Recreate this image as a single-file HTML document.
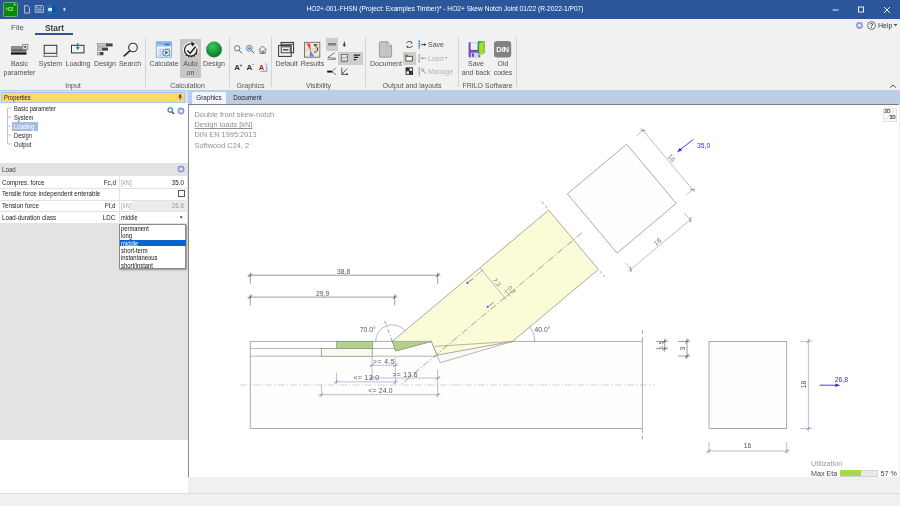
<!DOCTYPE html>
<html><head><meta charset="utf-8"><title>HO2+ Skew Notch Joint</title>
<style>
*{box-sizing:border-box;margin:0;padding:0}
html,body{width:900px;height:506px;overflow:hidden;background:#f0f0f0;font-family:"Liberation Sans",sans-serif;font-size:7px;color:#333}
.a{position:absolute}
.t{position:absolute;white-space:nowrap;line-height:9px}
.c{position:absolute;white-space:nowrap;line-height:9px;text-align:center;transform:translateX(-50%)}
#title{left:0;top:0;width:900px;height:18.6px;background:#2b579a}
#ribbon{left:0;top:18.6px;width:900px;height:72px;background:#f1f1f1}
#strip{left:0;top:90.2px;width:900px;height:14px;background:#bccde6}
.sep{position:absolute;top:37px;width:1px;height:50px;background:#d4d4d4}
.rl{color:#505050}
.gl{color:#555}
</style></head><body>
<div id="root" style="position:absolute;left:0;top:0;width:900px;height:506px;will-change:transform">
<div id="title" class="a"></div>
<div id="ribbon" class="a"></div>
<div id="strip" class="a"></div>

<!-- title bar -->
<div class="a" style="left:3.4px;top:2.3px;width:14.2px;height:14.3px;background:#058a05;border:0.8px solid #6db06d;border-radius:1.5px"></div>
<div class="t" style="left:5.7px;top:6.1px;color:#d4ecd4;font-size:4.6px;line-height:8px;letter-spacing:-0.3px;transform:scaleX(.85);transform-origin:0 50%">HO2</div>
<div class="t" style="left:13.2px;top:1.2px;color:#e4f4e4;font-size:5px;line-height:7px">+</div>
<svg class="a" style="left:22px;top:4px" width="50" height="12" viewBox="0 0 50 12">
 <path d="M2.6 1.6h3l1.9 1.9v5.6h-4.9z" fill="none" stroke="#e8edf6" stroke-width="0.7"/>
 <path d="M13.2 1.5h7.4l0.9 0.9v6h-8.3z" fill="none" stroke="#cfd9ea" stroke-width="0.7"/>
 <path d="M14.6 1.7v2.3h4.6v-2.3M14.2 5.6h6.2M14.2 7h6.2" fill="none" stroke="#cfd9ea" stroke-width="0.6"/>
 <rect x="25.3" y="1.5" width="8.8" height="8" fill="#1a73d0"/><rect x="30" y="1.5" width="4.1" height="8" fill="#0d50b0"/><path d="M25.3 9h8.8" stroke="#0a7a80" stroke-width="0.9"/>
 <rect x="26.2" y="4" width="3.8" height="3" fill="#e4ecf8"/>
 <path d="M41.4 3.8h2v2h-2z" fill="#cfd9ea"/><path d="M41.3 5.8h2.2l-1.1 1.5z" fill="#fff"/>
</svg>
<div class="c" style="left:445px;top:4px;color:#fff;font-size:6.62px;line-height:10px">HO2+-001-FHSN (Project: Examples Timber)* - HO2+ Skew Notch Joint 01/22 (R-2022-1/P07)</div>
<svg class="a" style="left:820px;top:0" width="80" height="18" viewBox="0 0 80 18">
 <path d="M12.5 10h6" stroke="#fff" stroke-width="0.9"/>
 <rect x="38.5" y="7" width="5" height="5" fill="none" stroke="#fff" stroke-width="0.9"/>
 <path d="M64 7l6 6M70 7l-6 6" stroke="#fff" stroke-width="0.9"/>
</svg>


<!-- menu tabs -->
<div class="c" style="left:17.5px;top:22.5px;font-size:8px;line-height:10px;color:#555">File</div>
<div class="c" style="left:54.5px;top:22.5px;font-size:8.3px;line-height:10px;color:#3a3a3a;font-weight:bold">Start</div>
<div class="a" style="left:35px;top:33px;width:38px;height:2px;background:#2b579a"></div>
<!-- help -->
<svg class="a" style="left:852px;top:19px" width="48" height="12" viewBox="0 0 48 12">
 <circle cx="7.5" cy="6.5" r="3.4" fill="#8d97d6"/><path d="M5.8 7.8v-2l1.7-1.4 1.7 1.4v2z" fill="#e8eafa"/>
 <circle cx="19.5" cy="6.5" r="3.9" fill="#fff" stroke="#444" stroke-width="0.8"/>
</svg>
<div class="t" style="left:869.6px;top:21px;font-size:6.5px;line-height:9px;color:#333;font-weight:bold">?</div>
<div class="t" style="left:878px;top:21px;font-size:7px;line-height:9px;color:#333">Help</div>
<svg class="a" style="left:893px;top:23px" width="6" height="5"><path d="M0.5 1h4l-2 2.2z" fill="#555"/></svg>
<svg class="a" style="left:888px;top:83px" width="10" height="6"><path d="M2 4.6l3-2.5 3 2.5" fill="none" stroke="#555" stroke-width="1"/></svg>
<!-- separators -->
<div class="sep" style="left:145px"></div><div class="sep" style="left:229px"></div><div class="sep" style="left:271px"></div>
<div class="sep" style="left:365px"></div><div class="sep" style="left:458px"></div><div class="sep" style="left:516px"></div>
<!-- pressed backgrounds -->
<div class="a" style="left:180px;top:39px;width:21px;height:39px;background:#c8c6c4"></div>
<div class="a" style="left:326px;top:38px;width:12px;height:13px;background:#cfcdcb"></div>
<div class="a" style="left:338px;top:52px;width:25px;height:13px;background:#cfcdcb"></div>
<div class="a" style="left:403px;top:52px;width:13px;height:13px;background:#cfcdcb"></div>
<!-- group labels -->
<div class="c gl" style="left:73px;top:81px">Input</div>
<div class="c gl" style="left:187.5px;top:81px">Calculation</div>
<div class="c gl" style="left:250.5px;top:81px">Graphics</div>
<div class="c gl" style="left:318.5px;top:81px">Visibility</div>
<div class="c gl" style="left:412px;top:81px">Output and layouts</div>
<div class="c gl" style="left:487.5px;top:81px">FRILO Software</div>
<!-- big button labels -->
<div class="c rl" style="left:19.5px;top:58.5px">Basic<br>parameter</div>
<div class="c rl" style="left:50.5px;top:58.5px">System</div>
<div class="c rl" style="left:78px;top:58.5px">Loading</div>
<div class="c rl" style="left:105px;top:58.5px">Design</div>
<div class="c rl" style="left:130px;top:58.5px">Search</div>
<div class="c rl" style="left:164px;top:58.5px">Calculate</div>
<div class="c rl" style="left:190.5px;top:58.5px">Auto<br>on</div>
<div class="c rl" style="left:214px;top:58.5px">Design</div>
<div class="c rl" style="left:286.5px;top:58.5px">Default</div>
<div class="c rl" style="left:312.5px;top:58.5px">Results</div>
<div class="c rl" style="left:386px;top:58.5px">Document</div>
<div class="c rl" style="left:476px;top:58.5px">Save<br>and back</div>
<div class="c rl" style="left:503px;top:58.5px">Old<br>codes</div>
<div class="t rl" style="left:428px;top:40px">Save</div>
<div class="t" style="left:428px;top:54px;color:#b4b4b4">Load</div>
<div class="t" style="left:428px;top:67px;color:#b4b4b4">Manage</div>
<svg class="a" style="left:444px;top:56px" width="6" height="5"><path d="M0.5 1h3.4l-1.7 2z" fill="#b4b4b4"/></svg>

<svg class="a" style="left:0;top:35px" width="900" height="55" viewBox="0 35 900 55">
<defs>
 <radialGradient id="gb" cx="0.4" cy="0.3" r="0.75"><stop offset="0" stop-color="#3fc765"/><stop offset="0.55" stop-color="#1a9a3c"/><stop offset="1" stop-color="#0c6a26"/></radialGradient>
 <linearGradient id="calc" x1="0" y1="0" x2="0" y2="1"><stop offset="0" stop-color="#6fa4e8"/><stop offset="1" stop-color="#b9d3f5"/></linearGradient>
</defs>
<!-- basic parameter -->
<rect x="11" y="46" width="13" height="3.2" fill="#8e8e8e"/>
<rect x="11" y="49.2" width="15.5" height="2.4" fill="#5c5c5c"/>
<rect x="11" y="52.3" width="15.5" height="2.3" fill="#151515"/>
<rect x="22.6" y="44.4" width="5.2" height="5.2" fill="#d8d8d8" stroke="#8c8c8c" stroke-width="0.9"/><rect x="24.3" y="46.1" width="1.8" height="1.8" fill="#555"/>
<!-- system -->
<rect x="44.2" y="45.3" width="12.6" height="8" fill="none" stroke="#333" stroke-width="1"/>
<path d="M44.2 53.3v3M56.8 53.3v3" stroke="#555" stroke-width="0.7"/>
<path d="M43.3 56.4h14.4" stroke="#333" stroke-width="0.7"/>
<!-- loading -->
<rect x="71.5" y="45.3" width="12.5" height="7.6" fill="none" stroke="#333" stroke-width="1"/>
<path d="M77.7 43v5" stroke="#0d8a8a" stroke-width="1.2"/><path d="M75.6 47.3h4.2l-2.1 2.7z" fill="#0d8a8a"/>
<!-- design bars -->
<rect x="97.3" y="43.6" width="9" height="2.6" fill="#c2c2c2" stroke="#777" stroke-width="0.5"/><rect x="106" y="43.4" width="6.6" height="3" fill="#444"/>
<rect x="97.3" y="47.8" width="5" height="2.6" fill="#c2c2c2" stroke="#777" stroke-width="0.5"/><rect x="102" y="47.6" width="6" height="3" fill="#444"/>
<rect x="97.3" y="52.2" width="3" height="2.8" fill="#c2c2c2" stroke="#777" stroke-width="0.5"/><rect x="100" y="52" width="3.5" height="3.2" fill="#444"/>
<!-- search -->
<circle cx="133" cy="47.5" r="4.3" fill="none" stroke="#333" stroke-width="1.1"/><path d="M129.8 50.8l-5.6 5" stroke="#333" stroke-width="1.8" stroke-linecap="round"/>
<!-- calculate -->
<rect x="156.3" y="41.8" width="15.2" height="15.4" fill="#f4f8fe" stroke="#6f9fe0" stroke-width="0.8"/>
<rect x="156.7" y="42.2" width="14.4" height="4.6" fill="url(#calc)"/>
<path d="M164.5 44.6h5" stroke="#2a5fb8" stroke-width="1.2"/>
<path d="M158 49.5h7M158 51.7h6M158 53.9h6M158 55.6h7M160.3 48.2v8M162.8 48.2v8" stroke="#9aa7b8" stroke-width="0.5"/>
<rect x="165.5" y="48.3" width="4.5" height="1.2" fill="#f0b060"/>
<circle cx="166.3" cy="52.6" r="3.5" fill="#d6e8fb" stroke="#3d83d6" stroke-width="0.9"/><path d="M165.2 50.8l3 1.8-3 1.8z" fill="#1558b6"/>
<rect x="169.3" y="55" width="1.2" height="1.2" fill="#e06030"/>
<!-- auto on -->
<circle cx="190.8" cy="49.8" r="8" fill="#f4f4f4" opacity="0.9"/>
<path d="M193.2 44.3a6.2 6.2 0 1 0 3.6 4.4" fill="none" stroke="#222" stroke-width="1.2"/>
<path d="M185.8 54.6a6.6 6.6 0 0 0 11.2 -1.9" fill="none" stroke="#222" stroke-width="1.3" stroke-dasharray="1.7 1.1"/>
<path d="M191.2 41.6l3.8 2.4-3 2.6z" fill="#222"/>
<path d="M187.4 50.5l2.7 2.9 5.6-6.8" fill="none" stroke="#222" stroke-width="1.5"/>
<!-- green ball -->
<circle cx="214" cy="49.5" r="7.9" fill="url(#gb)"/>
<!-- graphics small icons -->
<circle cx="237.2" cy="48.3" r="2.7" fill="none" stroke="#444" stroke-width="0.7"/><path d="M239.2 50.4l2.6 2.8" stroke="#444" stroke-width="0.9"/>
<circle cx="249.3" cy="48.3" r="2.9" fill="#e4f0fc" stroke="#456" stroke-width="0.7"/><path d="M249.3 46.6v3.4M247.6 48.3h3.4" stroke="#2a7fd6" stroke-width="0.9"/><path d="M251.4 50.5l2.7 2.8" stroke="#444" stroke-width="0.9"/>
<path d="M258.8 49.8l3.8-3.8 3.8 3.8M260 49.2v4.2h5.2v-4.2M262 53.4v-2.4h1.3v2.4" fill="none" stroke="#444" stroke-width="0.7"/>
<path d="M260.4 63.4h4.6l1.8 1.8v6.2h-6.4z" fill="#e9eef8"/><path d="M265 63.4l1.8 1.8v6.2h-6.4" fill="none" stroke="#6f95c8" stroke-width="0.9"/>
<!-- default -->
<rect x="281" y="42.4" width="12.6" height="10.3" fill="#f1f1f1" stroke="#333" stroke-width="1"/>
<path d="M281 44.3h12.6" stroke="#333" stroke-width="0.9"/>
<rect x="278.6" y="45.6" width="12.6" height="10.8" fill="#f1f1f1" stroke="#333" stroke-width="1"/>
<rect x="281.2" y="46.8" width="9" height="6" fill="#f1f1f1" stroke="#333" stroke-width="0.9"/>
<path d="M283 49.8h5.4" stroke="#333" stroke-width="1.3"/>
<!-- results -->
<rect x="304.5" y="42.3" width="15.3" height="14.9" fill="#efead8" stroke="#6e6c62" stroke-width="0.9"/>
<path d="M305 49.5h14.4" stroke="#e2dcc6" stroke-width="3"/>
<path d="M306.2 43.4h4.1l0.4 7.2z" fill="#f04444"/><path d="M310.3 50l4.1 6.6h-4.9z" fill="#5b8fcf"/>
<path d="M313.8 44.8h3.6M314.4 44.9c0.4 1.6 3.4 1.6 3.2 4.4c-0.2 2.2-2 3-3.4 3" fill="none" stroke="#222" stroke-width="1"/>
<!-- visibility small -->
<rect x="328" y="42.9" width="8.2" height="2.7" rx="1" fill="#777"/><path d="M329.5 44.1h5" stroke="#aaa" stroke-width="0.6" stroke-dasharray="0.8 0.5"/>
<path d="M344.3 41.6v4" stroke="#333" stroke-width="1"/><path d="M342.5 44.4h3.6l-1.8 2.6z" fill="#333"/>
<path d="M327.8 57.5l7-5M327.8 57.6l8 0.8" stroke="#444" stroke-width="0.7"/><path d="M327.5 59.4h8.5" stroke="#888" stroke-width="1"/>
<rect x="341.3" y="54.6" width="6.2" height="7" fill="#ececec" stroke="#555" stroke-width="0.7"/><path d="M341.6 58.6l1.6-1.2 1.4 0.8 1.4-1.6 1.2 1.4" fill="none" stroke="#444" stroke-width="0.5"/><path d="M341.5 60.2h6" stroke="#777" stroke-width="0.5"/>
<path d="M353.8 55.2h6.2M353.8 57.4h4.4M353.8 59.6h2.4" stroke="#222" stroke-width="1.3"/>
<path d="M327.2 71.6h5" stroke="#111" stroke-width="1.9"/><path d="M332 71.6l4-4M332 71.7l4 3" stroke="#444" stroke-width="0.7"/>
<path d="M341.8 67.6v7M341.8 74.4l5.6 0M342 74.2l5-5.6" stroke="#333" stroke-width="0.8" fill="none"/><rect x="346.3" y="73.3" width="1.6" height="1.6" fill="#333"/>
<!-- document -->
<path d="M380.4 41.8h7l4.2 4.2v10.2a1 1 0 0 1 -1 1h-10.2a1 1 0 0 1 -1 -1v-13.4a1 1 0 0 1 1 -1z" fill="#c4c4c4" stroke="#8e8e8e" stroke-width="0.8"/>
<path d="M387.4 41.8v4.2h4.2z" fill="#f1f1f1" stroke="#8e8e8e" stroke-width="0.7"/>
<!-- output small -->
<path d="M406.4 43.3a3.2 3.2 0 0 1 5.6 -0.6M412.4 45.5a3.2 3.2 0 0 1 -5.6 0.8" fill="none" stroke="#333" stroke-width="0.8"/><path d="M411 41.4l1.8 1.5-2 0.8zM408 48l-1.8-1.4 2-0.9z" fill="#333"/>
<path d="M405.8 56.4h6.6v4.6h-6.6z" fill="#fff" stroke="#333" stroke-width="0.8"/><path d="M405.3 54l3.2 1.8-3.2 1.8z" fill="#1c9a2a"/>
<rect x="405.6" y="67.4" width="7.4" height="7.4" fill="#222"/><rect x="409.6" y="68.3" width="2.6" height="2.6" fill="#f1f1f1"/><rect x="406.4" y="71.3" width="2.6" height="2.6" fill="#f1f1f1"/><path d="M407 70.6l2-2M410.6 73.4l2-2" stroke="#999" stroke-width="0.5"/>
<path d="M419.3 40.6v8" stroke="#2f6fb4" stroke-width="1.5" stroke-dasharray="1.6 0.7"/><path d="M421 44.6h4" stroke="#222" stroke-width="0.8"/><path d="M424.2 43.2l2 1.4-2 1.4z" fill="#222"/>
<path d="M419.3 54.2v8" stroke="#999" stroke-width="1.5" stroke-dasharray="1.6 0.7"/><path d="M422 58.2h4" stroke="#999" stroke-width="0.8"/><path d="M422.8 56.8l-2 1.4 2 1.4z" fill="#999"/>
<path d="M419.3 67.4v8" stroke="#999" stroke-width="1.5" stroke-dasharray="1.6 0.7"/><circle cx="422.6" cy="70" r="1.2" fill="none" stroke="#888" stroke-width="0.7"/><path d="M423.4 71l2.4 2.6" stroke="#888" stroke-width="0.9"/>
<!-- save and back -->
<path d="M468.6 42.3h11.6v15h-11.6z" fill="#6d4fb8"/><rect x="470.6" y="42.3" width="7" height="7.6" fill="#ececf4"/><rect x="470.8" y="52.6" width="7.8" height="4.7" fill="#d8d4e8"/><rect x="472" y="53.4" width="2" height="3.4" fill="#6d4fb8"/>
<path d="M478 41.2h6.6v12h-6.6z" fill="#24a23a"/><path d="M479.2 43.2l4.6-1.6v12.4l-4.6 1.6z" fill="#a8e030"/>
<!-- DIN -->
<rect x="494" y="41" width="17.2" height="16.6" rx="3" fill="#828282"/>
</svg>
<div class="c" style="left:502.6px;top:44.5px;color:#fff;font-weight:bold;font-size:7.6px;line-height:10px;letter-spacing:-0.2px">DIN</div>
<div class="t" style="left:234.2px;top:63px;font-size:8px;line-height:10px;color:#333;font-weight:bold">A</div><div class="t" style="left:239.6px;top:61.6px;font-size:5px;line-height:6px;color:#333;font-weight:bold">+</div>
<div class="t" style="left:246.6px;top:63px;font-size:8px;line-height:10px;color:#333;font-weight:bold">A</div><div class="t" style="left:252px;top:61.2px;font-size:6px;line-height:6px;color:#333;font-weight:bold">-</div>
<div class="t" style="left:258.8px;top:63px;font-size:7.4px;line-height:9px;color:#b01c1c;font-weight:bold">A</div>



<!-- left panel -->
<div class="a" style="left:0;top:90.7px;width:188.4px;height:12.6px;background:#d6e2f3"></div>
<div class="a" style="left:1.2px;top:91.7px;width:184px;height:11.2px;background:#ffd968;border:0.7px solid #a9c6ec"></div>
<div class="t" style="left:3.5px;top:93px;font-size:6.6px;transform:scaleX(.89);transform-origin:0 50%;color:#222">Properties</div>
<svg class="a" style="left:176px;top:93px" width="8" height="9" viewBox="0 0 8 9"><path d="M3.3 1.6h1.8v2.4h-1.8z" fill="#333"/><path d="M2.5 4.3h3.4M4.2 4.4v2.4" stroke="#333" stroke-width="0.7"/></svg>
<div class="a" style="left:0;top:103px;width:188.4px;height:60px;background:#fff"></div>
<div class="a" style="left:0;top:163px;width:188.4px;height:277px;background:#e3e3e3"></div>
<div class="a" style="left:0;top:440px;width:188.4px;height:53px;background:#fff"></div>
<!-- tree -->
<svg class="a" style="left:0;top:103px" width="20" height="50" viewBox="0 0 20 50"><path d="M7.5 5h4M7.5 14h4M7.5 23h4M7.5 32h4M7.5 41h4M7.5 5v36" stroke="#a0a0a0" stroke-width="0.6" fill="none"/></svg>
<div class="a" style="left:11.8px;top:122px;width:26.4px;height:9px;background:#a6bbe2"></div>
<div class="t" style="left:13.5px;top:103.5px;font-size:6.5px;transform:scaleX(.885);transform-origin:0 50%;color:#222">Basic parameter</div>
<div class="t" style="left:13.5px;top:112.5px;font-size:6.5px;transform:scaleX(.885);transform-origin:0 50%;color:#222">System</div>
<div class="t" style="left:13.5px;top:121.5px;font-size:6.5px;transform:scaleX(.885);transform-origin:0 50%;color:#fff">Loading</div>
<div class="t" style="left:13.5px;top:130.5px;font-size:6.5px;transform:scaleX(.885);transform-origin:0 50%;color:#222">Design</div>
<div class="t" style="left:13.5px;top:139.5px;font-size:6.5px;transform:scaleX(.885);transform-origin:0 50%;color:#222">Output</div>
<svg class="a" style="left:166px;top:106px" width="22" height="10" viewBox="0 0 22 10">
 <circle cx="4.2" cy="4" r="2.2" fill="#f4f9fe" stroke="#2f74c4" stroke-width="1.1"/><path d="M5.8 5.8l2.3 2.2" stroke="#2a4f9a" stroke-width="1.3"/>
 <circle cx="15" cy="5" r="3.4" fill="#8d97d6"/><path d="M13.3 6.4v-2l1.7-1.4 1.7 1.4v2z" fill="#e8eafa"/>
</svg>
<!-- Load section -->
<div class="t" style="left:2px;top:164.5px;font-size:6.6px;transform:scaleX(.94);transform-origin:0 50%;color:#444">Load</div>
<svg class="a" style="left:176px;top:164px" width="10" height="10" viewBox="0 0 10 10"><circle cx="5" cy="5" r="3.4" fill="#8d97d6"/><path d="M3.3 6.4v-2l1.7-1.4 1.7 1.4v2z" fill="#e8eafa"/></svg>
<div class="a" style="left:0;top:176px;width:187px;height:47px;background:#fff"></div>
<div class="a" style="left:0;top:187.7px;width:187px;height:0.7px;background:#e2e2e2"></div>
<div class="a" style="left:0;top:199.5px;width:187px;height:0.7px;background:#e2e2e2"></div>
<div class="a" style="left:0;top:211.4px;width:187px;height:0.7px;background:#e2e2e2"></div>
<div class="a" style="left:118.5px;top:176px;width:0.7px;height:47px;background:#e2e2e2"></div>
<div class="a" style="left:132px;top:201px;width:54.5px;height:9.5px;background:#ececec"></div>
<div class="t" style="left:2px;top:177.6px;font-size:6.6px;transform:scaleX(.94);transform-origin:0 50%;color:#222">Compres. force</div>
<div class="t" style="left:2px;top:188.9px;font-size:6.6px;transform:scaleX(.94);transform-origin:0 50%;color:#222">Tensile force independent enterable</div>
<div class="t" style="left:2px;top:201.2px;font-size:6.6px;transform:scaleX(.94);transform-origin:0 50%;color:#222">Tension force</div>
<div class="t" style="left:2px;top:213px;font-size:6.6px;transform:scaleX(.94);transform-origin:0 50%;color:#222">Load-duration class</div>
<div class="t" style="right:784.5px;top:177.6px;font-size:6.6px;transform:scaleX(.94);transform-origin:100% 50%;color:#222">Fc,d</div>
<div class="t" style="right:784.5px;top:201.2px;font-size:6.6px;transform:scaleX(.94);transform-origin:100% 50%;color:#222">Ft,d</div>
<div class="t" style="right:784.5px;top:213px;font-size:6.6px;transform:scaleX(.94);transform-origin:100% 50%;color:#222">LDC</div>
<div class="t" style="left:120.8px;top:177.6px;font-size:6.6px;transform:scaleX(.9);transform-origin:0 50%;color:#a6a6a6">[kN]</div>
<div class="t" style="left:120.8px;top:201.2px;font-size:6.6px;transform:scaleX(.9);transform-origin:0 50%;color:#a6a6a6">[kN]</div>
<div class="t" style="right:716px;top:177.6px;font-size:6.6px;transform:scaleX(.94);transform-origin:100% 50%;color:#222">35.0</div>
<div class="t" style="right:716px;top:201.2px;font-size:6.6px;transform:scaleX(.94);transform-origin:100% 50%;color:#999">26.8</div>
<div class="a" style="left:178px;top:190.4px;width:7px;height:7px;background:#fff;border:0.7px solid #555"></div>
<div class="t" style="left:121px;top:213.2px;font-size:6.3px;transform:scaleX(.89);transform-origin:0 50%;color:#222">middle</div>
<svg class="a" style="left:178px;top:215px" width="7" height="5"><path d="M1.6 1.4h3.2l-1.6 2z" fill="#222"/></svg>
<!-- dropdown -->
<div class="a" style="left:119.3px;top:223.6px;width:67px;height:45px;background:#fff;border:0.8px solid #8a8a8a;box-shadow:1px 1px 1.5px rgba(0,0,0,0.35)"></div>
<div class="a" style="left:120px;top:240px;width:65.6px;height:6.2px;background:#0a64cf"></div>
<div class="t" style="left:120.5px;top:225.2px;font-size:6.3px;transform:scaleX(.93);transform-origin:0 50%;color:#111;line-height:7.3px">permanent<br>long<br><span style="color:#fff">middle</span><br>short-term<br>instantaneous<br>short/instant</div>


<!-- canvas -->
<div class="a" style="left:188.4px;top:104px;width:710.6px;height:373.3px;background:#fff;border-left:1.8px solid #8a8a8a;border-top:1.4px solid #7d7d7d"></div>
<!-- tabs -->
<div class="a" style="left:192px;top:92px;width:34px;height:12px;background:#f2f6fc;border-radius:2px 2px 0 0"></div>
<div class="c" style="left:209px;top:93px;font-size:6.35px;color:#222">Graphics</div>
<div class="c" style="left:247.5px;top:93px;font-size:6.3px;color:#222">Document</div>
<!-- info text -->
<div class="t" style="left:194.5px;top:110px;font-size:7.4px;line-height:10.2px;color:#909090">Double front skew-notch<br><span style="text-decoration:underline">Design loads [kN]</span><br>DIN EN 1995:2013<br>Softwood C24, 2</div>
<!-- 2D/3D -->
<div class="a" style="left:883px;top:108px;width:14px;height:13.5px;background:#fafafa;border:0.7px solid #e0e0e0"></div>
<svg class="a" style="left:883px;top:108px" width="14" height="14"><path d="M3 11.5l8.5-9.5" stroke="#f2c68a" stroke-width="0.8"/></svg>
<div class="t" style="left:884.3px;top:108.6px;font-size:4.8px;line-height:6px;font-weight:bold;color:#444">2D</div>
<div class="t" style="left:889.5px;top:114.6px;font-size:4.8px;line-height:6px;font-weight:bold;color:#444">3D</div>
<!-- utilization -->
<div class="t" style="left:811px;top:459px;font-size:7.2px;color:#999">Utilization</div>
<div class="t" style="left:811px;top:468.8px;font-size:7.2px;color:#444">Max Eta</div>
<div class="a" style="left:840px;top:469.8px;width:38.2px;height:6.8px;background:#e9e9e9;border:0.7px solid #d4d4d4"></div>
<div class="a" style="left:840.4px;top:470.4px;width:21px;height:5.8px;background:#a6da4c"></div>
<div class="t" style="left:880.5px;top:468.8px;font-size:7.2px;color:#444">57 %</div>
<!-- status -->
<div class="a" style="left:0;top:493px;width:900px;height:0.8px;background:#dcdcdc"></div>
<!--DRAW_S-->
<svg class="a" style="left:0;top:0" width="900" height="506" viewBox="0 0 900 506" font-family="Liberation Sans, sans-serif" font-size="6.8" fill="none">
<path d="M250.3 341.4H642.4V428.5H250.3z" fill="#fefefc" stroke="#868686" stroke-width="0.7"/>
<path d="M431.4 341.4L440.2 362.8L512.5 341.4z" fill="#fafaf4" stroke="#868686" stroke-width="0.6"/>
<path d="M392.3 341.4L395.8 350.9L431.4 341.4L437.1 355.1L512.5 341.4L598.4 269.4L548.7 210.1z" fill="#fbfbd8" stroke="#868686" stroke-width="0.7" stroke-linejoin="round"/>
<path d="M392.3 341.4L395.8 350.9L431.4 341.4z" fill="#b3d288" stroke="#868686" stroke-width="0.6"/>
<path d="M434.8 346.4L512.5 341.4" stroke="#868686" stroke-width="0.6"/>
<path d="M250.3 348.5H394.9M250.3 356.2H437.5M321.4 348.5V356.2M372.1 348.5V356.2" stroke="#868686" stroke-width="0.6"/>
<rect x="321.4" y="348.5" width="50.7" height="7.7" fill="#f9fbf1" stroke="#868686" stroke-width="0.6"/>
<rect x="336.5" y="341.4" width="36.3" height="7.1" fill="#b4d28c" stroke="#868686" stroke-width="0.6"/>
<path d="M240 385H655" stroke="#a4a4a4" stroke-width="0.5" stroke-dasharray="7 2 1.5 2"/>
<path d="M642.4 330.3V341M642.4 429V439.5" stroke="#666" stroke-width="0.6" stroke-dasharray="4 3"/>
<path d="M582.0 232.7L400.3 385" stroke="#666" stroke-width="0.6" stroke-dasharray="7 2 1.5 2"/>
<path d="M541.7 201.7L547.4 208.6M599.7 270.9L604.8 277.0" stroke="#666" stroke-width="0.6" stroke-dasharray="3 2.5"/>
<path d="M375.6 341.4A16.7 16.7 0 0 1 405.1 330.7" stroke="#868686" stroke-width="0.6"/>
<path d="M392.3 341.4L384.8 320.7" stroke="#555" stroke-width="0.6" stroke-dasharray="4 2 1 2"/>
<path d="M535.0 341.4A22.5 22.5 0 0 0 529.7 326.9" stroke="#868686" stroke-width="0.6"/>
<path d="M247.5 275.2H440.5M250.3 272.6V283.6M437.7 272.6V283.6M247.5 297.1H397.5M250.3 294.4V305.4M394.7 294.4V305.4" stroke="#555" stroke-width="0.6"/>
<path d="M248.5 277.0L252.1 273.4M435.9 277.0L439.5 273.4M248.5 298.9L252.1 295.3M392.9 298.9L396.5 295.3" stroke="#333" stroke-width="0.7"/>
<path d="M369.5 365.3H398M372.1 356.5V380.5M395.3 357V384M369.5 378H440.5M437.7 369.6V397.5M334 381.9H398M336.5 372.6V384M318.5 394.7H440.5M321.4 384.5V397.5" stroke="#9292bc" stroke-width="0.6"/>
<path d="M370.3 367.1L373.9 363.5M393.5 367.1L397.1 363.5M370.3 379.8L373.9 376.2M435.9 379.8L439.5 376.2M334.7 383.7L338.3 380.1M393.5 383.7L397.1 380.1M319.6 396.5L323.2 392.9M435.9 396.5L439.5 392.9" stroke="#6a6aa8" stroke-width="0.7"/>
<path d="M656 341.4H668M656 348.7H668M664.7 338.5V351.6M678 341.4H690M678 356.1H690M687 338.5V359" stroke="#555" stroke-width="0.6"/>
<path d="M662.9 343.2L666.5 339.6M662.9 350.5L666.5 346.9M685.2 343.2L688.8 339.6M685.2 357.9L688.8 354.3" stroke="#333" stroke-width="0.7"/>
<rect x="709" y="341.4" width="77.7" height="87.1" fill="#fefefc" stroke="#868686" stroke-width="0.7"/>
<path d="M567.4 193.9L626.6 144.2L676.3 203.4L617.1 253.1z" fill="#fefefc" stroke="#868686" stroke-width="0.7"/>
<path d="M808.4 338.5V431.5M800 341.4H812M800 428.5H812M706 451H789.5M709 442V453.5M786.7 442V453.5" stroke="#9292bc" stroke-width="0.6"/>
<path d="M806.6 343.2L810.2 339.6M806.6 430.3L810.2 426.7M707.2 452.8L710.8 449.2M784.9 452.8L788.5 449.2" stroke="#6a6aa8" stroke-width="0.7"/>
<path d="M641.1 128.2L694.6 192.0M636.5 135.9L644.7 129.0M686.2 195.1L694.4 188.3M628.5 271.4L692.4 217.9M625.4 263.0L632.3 271.2M684.6 213.3L691.5 221.5" stroke="#9292bc" stroke-width="0.6"/>
<path d="M640.5 130.2L645.5 130.8M690.2 189.4L695.2 190.0M630.5 267.0L631.1 272.0M689.8 217.3L690.4 222.3" stroke="#6a6aa8" stroke-width="0.7"/>
<path d="M479.8 267.7L506.2 299.6M475.2 276.3L484.0 268.9M502.7 299.3L506.5 296.1M504.4 289.4L510.6 296.5M504.1 292.9L507.9 289.7M507.1 296.2L510.9 293.0" stroke="#8a8ab0" stroke-width="0.6"/>
<path d="M693.3 139.5L680.9 149.1" stroke="#2a2aff" stroke-width="0.9"/><path d="M677.0 152.2L679.9 147.8L682.0 150.5z" fill="#2a2aff"/>
<path d="M819.7 385.2L835.3 385.2" stroke="#2a2aff" stroke-width="0.9"/><path d="M840.3 385.2L835.3 386.9L835.3 383.5z" fill="#2a2aff"/>
<path d="M473.5 278.4L468.0 282.4" stroke="#2a2aff" stroke-width="0.6"/><path d="M465.9 283.9L467.4 281.5L468.7 283.3z" fill="#2a2aff"/>
<path d="M493.6 302.6L488.3 306.3" stroke="#2a2aff" stroke-width="0.6"/><path d="M486.2 307.8L487.7 305.4L489.0 307.2z" fill="#2a2aff"/>
<text x="343.7" y="274" fill="#555" text-anchor="middle">38,8</text>
<text x="322.6" y="295.7" fill="#555" text-anchor="middle">29,9</text>
<text x="367.8" y="331.5" fill="#555" text-anchor="middle">70.0°</text>
<text x="542.5" y="332.4" fill="#555" text-anchor="middle">40.0°</text>
<text x="373.1" y="363.6" fill="#555" textLength="21.4" lengthAdjust="spacing">&gt;= 4.5</text>
<text x="392.4" y="377" fill="#555" textLength="25.1" lengthAdjust="spacing">&gt;= 13.6</text>
<text x="353.4" y="380" fill="#555" textLength="25.6" lengthAdjust="spacing">&lt;= 12.0</text>
<text x="368.2" y="393.3" fill="#555" textLength="24.3" lengthAdjust="spacing">&lt;= 24.0</text>
<text x="747.6" y="448" fill="#555" text-anchor="middle">16</text>
<text x="806.3" y="384.5" fill="#555" text-anchor="middle" transform="rotate(-90 806.3 384.5)">18</text>
<text x="684.6" y="348.7" fill="#555" text-anchor="middle" transform="rotate(-90 684.6 348.7)">3</text>
<text x="662.6" y="345" fill="#555" text-anchor="middle" transform="rotate(-90 662.6 345)" font-size="5.5">1.5</text>
<text x="669.8" y="159.5" fill="#777" text-anchor="middle" transform="rotate(50 669.8 159.5)">16</text>
<text x="659" y="243.5" fill="#777" text-anchor="middle" transform="rotate(-40 659 243.5)">16</text>
<text x="495.3" y="283.6" fill="#777" text-anchor="middle" transform="rotate(50 495.3 283.6)" font-size="6.2">7,3</text>
<text x="510.2" y="291.2" fill="#777" text-anchor="middle" transform="rotate(50 510.2 291.2)" font-size="6">0,7</text>
<text x="697" y="148" fill="#2a2aff" text-anchor="start">35,0</text>
<text x="834.7" y="381.6" fill="#2a2aff" text-anchor="start">26,8</text>
</svg>
<!--DRAW_E-->

</div>
</body></html>
